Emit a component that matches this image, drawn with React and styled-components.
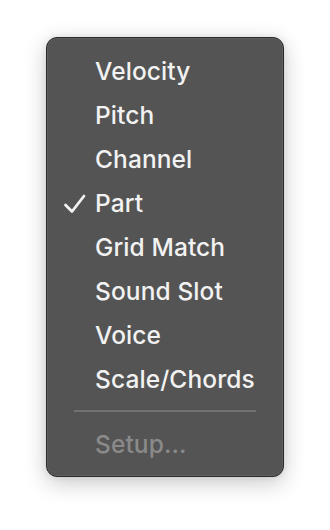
import React from 'react';
import styled, { createGlobalStyle } from 'styled-components';

const GlobalStyle = createGlobalStyle`
  html, body {
    margin: 0;
    padding: 0;
    background: #ffffff;
  }
  body {
    width: 330px;
    height: 530px;
    font-family: Inter, "Liberation Sans", sans-serif;
  }
`;

const Page = styled.div`
  padding: 37px 0 0 46px;
`;

const Menu = styled.div`
  box-sizing: border-box;
  width: 238px;
  padding: 11px 0 10px;
  background: #545454;
  border: 1px solid #2a2a2a;
  border-radius: 11px;
  box-shadow: 0 0 0 0.5px rgba(255, 255, 255, 0.15) inset,
    0 6px 22px rgba(0, 0, 0, 0.22), 0 0 6px rgba(0, 0, 0, 0.08);
`;

const Item = styled.div`
  position: relative;
  height: 44px;
  display: flex;
  align-items: center;
  padding-left: 48px;
  font-size: 24.5px;
  font-weight: 500;
  letter-spacing: 0.1px;
  color: ${({ disabled }) => (disabled ? '#8a8a8a' : '#f2f2f2')};
`;

const Check = styled.svg`
  position: absolute;
  left: 16px;
  top: 12px;
`;

const Separator = styled.div`
  height: 2px;
  margin: 9px 27px 10px;
  background: #717171;
`;

const items = ['Velocity', 'Pitch', 'Channel', 'Part', 'Grid Match', 'Sound Slot', 'Voice', 'Scale/Chords'];

export default function App() {
  return (
    <Page>
      <GlobalStyle />
      <Menu>
        {items.map((label) => (
          <Item key={label}>
            {label === 'Part' && (
              <Check width="24" height="22" viewBox="0 0 24 22">
                <path d="M2.5 12 L9 18.5 L21 3" fill="none" stroke="#f2f2f2" strokeWidth="2.8" strokeLinecap="round" strokeLinejoin="round" />
              </Check>
            )}
            {label}
          </Item>
        ))}
        <Separator />
        <Item disabled>Setup...</Item>
      </Menu>
    </Page>
  );
}
